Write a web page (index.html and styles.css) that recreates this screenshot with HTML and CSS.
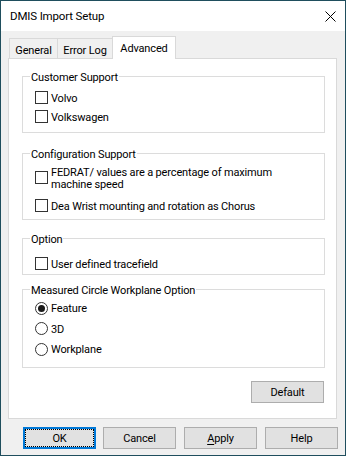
FILE: index.html
```html
<!DOCTYPE html>
<html>
<head>
<meta charset="utf-8">
<link rel="stylesheet" href="styles.css">
</head>
<body>
<div class="window">
  <div class="titlebar">
    <span class="title">DMIS Import Setup</span>
    <svg class="close" width="11" height="11" viewBox="0 0 11 11">
      <path d="M0.5 0.5 L10.5 10.5 M10.5 0.5 L0.5 10.5" stroke="#000" stroke-width="1" fill="none"/>
    </svg>
  </div>
  <div class="client">
    <div class="tabs">
      <div class="tab t-general">General</div>
      <div class="tab t-error">Error Log</div>
      <div class="tab t-adv active">Advanced</div>
    </div>
    <div class="panel">
      <div class="group g1">
        <div class="legend">Customer Support</div>
        <div class="rows r1">
          <div class="row"><span class="cb"></span><span class="lbl">Volvo</span></div>
          <div class="row"><span class="cb"></span><span class="lbl">Volkswagen</span></div>
        </div>
      </div>
      <div class="group g2">
        <div class="legend">Configuration Support</div>
        <div class="rows r2">
          <div class="row multi"><span class="cb"></span><span class="lbl">FEDRAT/ values are a percentage of maximum<br>machine speed</span></div>
          <div class="row gapped"><span class="cb"></span><span class="lbl">Dea Wrist mounting and rotation as Chorus</span></div>
        </div>
      </div>
      <div class="group g3">
        <div class="legend">Option</div>
        <div class="rows r3">
          <div class="row"><span class="cb"></span><span class="lbl">User defined tracefield</span></div>
        </div>
      </div>
      <div class="group g4">
        <div class="legend">Measured Circle Workplane Option</div>
        <div class="rows r4">
          <div class="row radio-row"><span class="rb checked"></span><span class="lbl">Feature</span></div>
          <div class="row radio-row"><span class="rb"></span><span class="lbl">3D</span></div>
          <div class="row radio-row"><span class="rb"></span><span class="lbl">Workplane</span></div>
        </div>
      </div>
      <div class="default-wrap">
        <div class="btn">Default</div>
      </div>
    </div>
    <div class="buttons">
      <div class="btn focused">OK</div>
      <div class="btn">Cancel</div>
      <div class="btn"><span><u>A</u>pply</span></div>
      <div class="btn">Help</div>
    </div>
  </div>
</div>
</body>
</html>
```
FILE: styles.css
```css
html, body {
  margin: 0;
  padding: 0;
  background: #ffffff;
}
body {
  font-family: Roboto, "Liberation Sans", sans-serif;
  font-size: 11px;
  letter-spacing: -0.15px;
  line-height: 15px;
  color: #000;
}
.window {
  width: 346px;
  height: 456px;
  box-sizing: border-box;
  border: 1px solid #1f4e5d;
  background: #f0f0f0;
  display: flex;
  flex-direction: column;
}
.titlebar {
  height: 30px;
  background: #ffffff;
  display: flex;
  align-items: center;
  justify-content: space-between;
  padding-left: 9px;
  padding-right: 9px;
}
.title {
  font-size: 11.5px;
  line-height: 15px;
  padding-top: 1px;
}
.close {
  display: block;
}
.client {
  display: flex;
  flex-direction: column;
  padding: 5px 0 0 7px;
}
.tabs {
  display: flex;
  align-items: flex-end;
  height: 22px;
  padding-left: 1px;
}
.tab {
  box-sizing: border-box;
  height: 20px;
  border: 1px solid #d9d9d9;
  border-bottom: none;
  background: #f0f0f0;
  text-align: center;
  padding-top: 4px;
}
.t-general { width: 49px; }
.t-error { width: 55px; border-left: none; }
.t-adv { width: 64px; margin-left: -1px; }
.tab.active {
  height: 23px;
  background: #ffffff;
  margin-bottom: -1px;
  position: relative;
  z-index: 1;
}
.panel {
  box-sizing: border-box;
  width: 329px;
  height: 361px;
  background: #ffffff;
  border: 1px solid #d9d9d9;
  display: flex;
  flex-direction: column;
  padding: 17px 11px 0 13px;
}
.group {
  border: 1px solid #dcdcdc;
  display: flex;
  flex-direction: column;
}
.legend {
  align-self: flex-start;
  margin: -7px 0 0 7px;
  padding: 0 1px;
  background: #ffffff;
  height: 15px;
  line-height: 15px;
}
.rows {
  display: flex;
  flex-direction: column;
  padding-left: 12px;
}
.row {
  display: flex;
  align-items: center;
  height: 19px;
}
.lbl {
  padding-left: 3px;
  padding-top: 1px;
}
.cb {
  box-sizing: border-box;
  width: 13px;
  height: 13px;
  border: 1px solid #333333;
  background: #ffffff;
  flex: none;
}
.rb {
  box-sizing: border-box;
  width: 13px;
  height: 13px;
  border: 1px solid #333333;
  border-radius: 50%;
  background: #ffffff;
  flex: none;
  display: flex;
  align-items: center;
  justify-content: center;
}
.rb.checked::after {
  content: "";
  width: 7px;
  height: 7px;
  border-radius: 50%;
  background: #1a1a1a;
}
.r1 { padding-top: 3px; padding-bottom: 6px; }
.g2 { margin-top: 20px; }
.r2 { padding-top: 5px; padding-bottom: 4px; }
.row.multi {
  height: 24px;
  align-items: flex-start;
}
.row.multi .cb { margin-top: 4px; }
.row.multi .lbl { line-height: 12px; padding-top: 0; }
.row.gapped { margin-top: 5px; }
.g3 { margin-top: 18px; }
.r3 { padding-top: 7px; padding-bottom: 1px; }
.g4 { margin-top: 14px; }
.r4 { padding-top: 0; padding-bottom: 7.5px; }
.radio-row { height: 20.5px; }
.default-wrap {
  display: flex;
  justify-content: flex-end;
  margin-top: 13px;
  padding-right: 1px;
}
.btn {
  box-sizing: border-box;
  width: 73px;
  height: 22px;
  border: 1px solid #adadad;
  background: #e1e1e1;
  display: flex;
  align-items: center;
  justify-content: center;
}
.buttons {
  display: flex;
  gap: 8px;
  margin-top: 8px;
  padding-left: 15px;
}
.btn.focused {
  border: 2px solid #0078d7;
  outline: 1px dotted #000;
  outline-offset: -3px;
  margin-right: -1px;
}
u {
  text-decoration: underline;
  text-underline-offset: 2px;
}
```
